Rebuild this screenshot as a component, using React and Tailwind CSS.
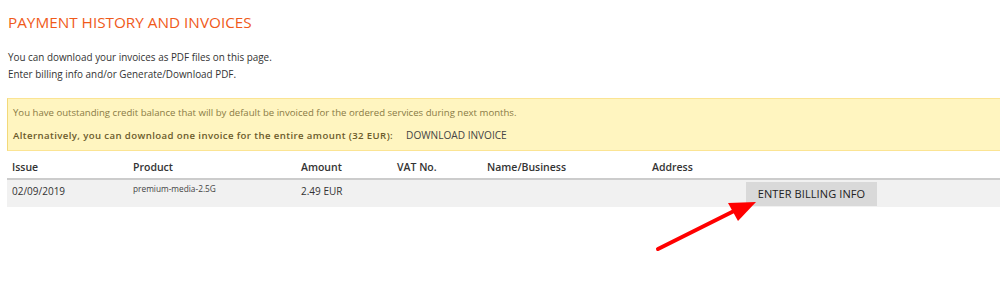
import React from 'react';

const columns = ['Issue', 'Product', 'Amount', 'VAT No.', 'Name/Business', 'Address'];

const invoices = [
  { issue: '02/09/2019', product: 'premium-media-2.5G', amount: '2.49 EUR', vat: '', name: '', address: '' },
];

const App = () => {
  return (
    <div className="w-[1000px] h-[304px] bg-white overflow-hidden font-['Open_Sans',sans-serif] text-[#333]">
      <div className="pl-[7px] w-[1010px]">
        <h1 className="text-[15.3px] leading-[22px] text-[#f05a1a] pt-[11px] pl-px font-normal">
          PAYMENT HISTORY AND INVOICES
        </h1>

        <div className="mt-[16px] pl-px text-[9.9px] leading-[17px] text-[#333]">
          <p>You can download your invoices as PDF files on this page.</p>
          <p>Enter billing info and/or Generate/Download PDF.</p>
        </div>

        {/* credit balance notice */}
        <div className="mt-[15px] h-[53px] bg-[#fff5c0] border border-[#fbe493] border-l-[#f3d97a] pl-[5px] pt-[5px] text-[9.6px]">
          <p className="leading-[17px] text-[#8a7b45]">
            You have outstanding credit balance that will by default be invoiced for the ordered services during next months.
          </p>
          <div className="flex items-center mt-[6px] leading-[17px]">
            <span className="font-semibold text-[#6b5b2b] tracking-[0.4px]">
              Alternatively, you can download one invoice for the entire amount (32 EUR):
            </span>
            <button className="ml-[13px] text-[#444] text-[10.1px]">DOWNLOAD INVOICE</button>
          </div>
        </div>

        <table className="w-[993px] mt-[6px] text-left border-collapse">
          <thead>
            <tr className="border-b-2 border-[#cccccc] text-[10.5px] text-[#333]">
              {columns.map((col, i) => (
                <th
                  key={col}
                  className={
                    i === 0 ? 'font-semibold w-[126px] pl-[5px] h-[22px] align-middle'
                    : i === 1 ? 'font-semibold w-[168px]'
                    : i === 2 ? 'font-semibold w-[96px]'
                    : i === 3 ? 'font-semibold w-[90px]'
                    : i === 4 ? 'font-semibold w-[165px]'
                    : 'font-semibold'
                  }
                >
                  {col}
                </th>
              ))}
            </tr>
          </thead>
          <tbody>
            {invoices.map((row) => (
              <tr key={row.issue} className="bg-[#f1f1f1] h-[28px]">
                <td className="pl-[5px] text-[10px] align-top pt-[4px]">{row.issue}</td>
                <td className="text-[8.3px] align-top pt-[3px] text-[#444]">{row.product}</td>
                <td className="text-[10px] align-top pt-[4px]">{row.amount}</td>
                <td>{row.vat}</td>
                <td>{row.name}</td>
                <td className="align-top pt-[2px]">
                  <div className="flex">
                    <button className="ml-[94px] w-[131px] h-[24px] bg-[#d9d9d9] text-[11px] tracking-[0.1px] text-[#222]">
                      ENTER BILLING INFO
                    </button>
                  </div>
                </td>
              </tr>
            ))}
          </tbody>
        </table>
      </div>

      {/* annotation arrow */}
      <svg className="absolute left-0 top-0 pointer-events-none" width="1000" height="304">
        <line x1="658" y1="249" x2="736" y2="210" stroke="#ff0000" strokeWidth="4" strokeLinecap="round" />
        <polygon points="756,202 728,203 738,221" fill="#ff0000" />
      </svg>
    </div>
  );
};

export default App;
